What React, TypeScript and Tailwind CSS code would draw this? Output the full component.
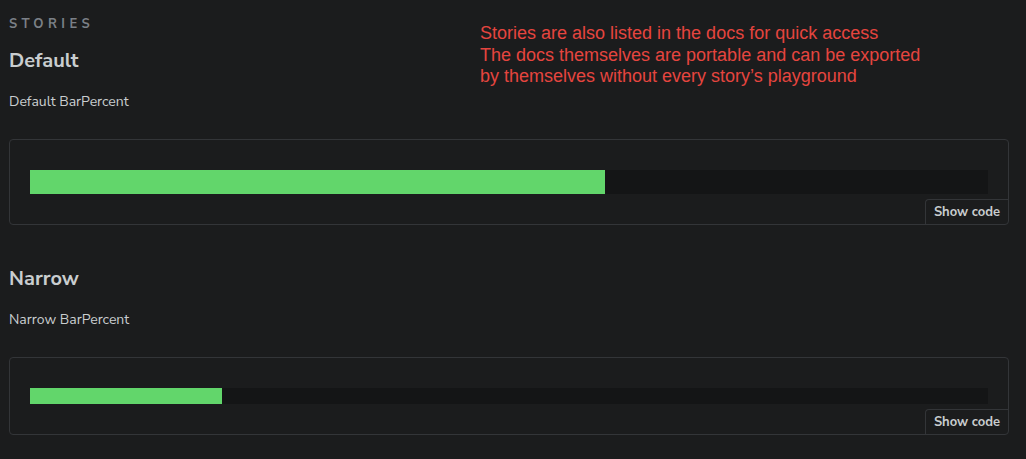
const FONT = { fontFamily: '"Nunito Sans", Lato, "Noto Sans", sans-serif' };

type Story = { title: string; desc: string; percent: number; barH: string };

const STORIES: Story[] = [
  { title: 'Default', desc: 'Default BarPercent', percent: 60, barH: 'h-[24px]' },
  { title: 'Narrow', desc: 'Narrow BarPercent', percent: 20, barH: 'h-[16px]' },
];

function StoryBlock({ story, first }: { story: Story; first: boolean }) {
  return (
    <section className={first ? 'mt-[15px]' : 'mt-[40px]'}>
      <h3 className="text-[20px] leading-[28px] font-bold text-[#c9cdcf]">{story.title}</h3>
      <p className="mt-[17px] text-[14px] leading-[20px] text-[#c9cdcf]">{story.desc}</p>

      {/* Preview box */}
      <div className="mt-[27px] border border-[#333538] rounded-[4px] bg-[#1b1c1d] pt-[30px]">
        <div className="px-[20px]">
          <div className={`w-full ${story.barH} bg-[#141516]`}>
            <div className="h-full bg-[#62d66b]" style={{ width: `${story.percent}%` }} />
          </div>
        </div>
        <div className="flex justify-end mt-[5px]">
          <button
            type="button"
            className="h-[25px] px-[8px] border-t border-l border-[#333538] rounded-tl-[4px] text-[13px] font-bold text-[#c9cdcf] leading-none"
          >
            Show code
          </button>
        </div>
      </div>
    </section>
  );
}

export default function App() {
  return (
    <div className="relative w-[1026px] h-[459px] overflow-hidden bg-[#1b1c1d]" style={FONT}>
      <div className="pl-[9px] pr-[17px] pt-[16px]">
        <h2 className="text-[13px] leading-[16px] font-bold tracking-[0.34em] text-[#7b8087]">STORIES</h2>
        {STORIES.map((s, i) => (
          <StoryBlock key={s.title} story={s} first={i === 0} />
        ))}
      </div>

      {/* Annotation overlay */}
      <div
        className="absolute left-[480px] top-[23px] text-[18px] leading-[21.5px] text-[#e5453f]"
        style={{ fontFamily: '"Liberation Sans", Arial, sans-serif' }}
      >
        <p>Stories are also listed in the docs for quick access</p>
        <p>The docs themselves are portable and can be exported</p>
        <p>by themselves without every story’s playground</p>
      </div>
    </div>
  );
}
